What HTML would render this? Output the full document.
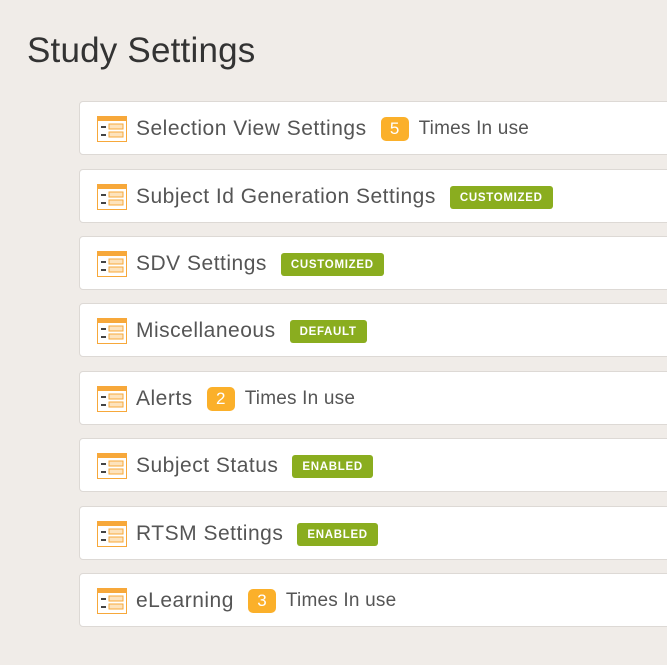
<!DOCTYPE html>
<html><head><style>
body{margin:0;width:667px;height:665px;background:#f0ece8;font-family:"Liberation Sans",sans-serif;overflow:hidden;position:relative}
h1{position:absolute;left:27px;top:31px;margin:0;font-weight:normal;font-size:35px;color:#333;letter-spacing:0.2px}
.card{position:absolute;left:79px;width:600px;height:54px;background:#fff;border:1px solid #ddd9d5;border-radius:4px;box-sizing:border-box}
.ic{position:absolute;left:17px;top:14px}
.t{position:absolute;left:56px;top:15px;font-size:21px;letter-spacing:0.5px;color:#555;white-space:nowrap;display:flex;align-items:center}
.u{font-size:19px;letter-spacing:0.2px}
.n{display:inline-block;background:#fbb02a;color:#fff;border-radius:5px;width:28px;height:24px;line-height:24px;text-align:center;font-size:17px;margin:0 10px 0 14px;letter-spacing:0}
.g{display:inline-block;background:#8aad1f;color:#fff;border-radius:3px;height:23px;line-height:24px;padding:0 10px;font-size:11.5px;font-weight:bold;margin-left:14px;letter-spacing:.7px}
</style></head><body>
<h1>Study Settings</h1>
<svg width="0" height="0" style="position:absolute"><defs><g id="i"><rect x="0.5" y="0.5" width="29" height="25" fill="#fff" stroke="#f7a83a"/><rect x="0" y="0" width="30" height="5" fill="#f7a83a"/><rect x="12" y="8" width="14" height="5" fill="#fde3bd" stroke="#f7a83a"/><rect x="12" y="16" width="14" height="5" fill="#fde3bd" stroke="#f7a83a"/><rect x="4" y="10" width="5" height="2" fill="#444"/><rect x="4" y="18" width="5" height="2" fill="#444"/></g></defs></svg>
<div class="card" style="top:101px"><svg class="ic" width="30" height="26"><use href="#i"/></svg><div class="t">Selection View Settings<span class="n">5</span><span class="u">Times In use</span></div></div>
<div class="card" style="top:169px"><svg class="ic" width="30" height="26"><use href="#i"/></svg><div class="t">Subject Id Generation Settings<span class="g">CUSTOMIZED</span></div></div>
<div class="card" style="top:236px"><svg class="ic" width="30" height="26"><use href="#i"/></svg><div class="t">SDV Settings<span class="g">CUSTOMIZED</span></div></div>
<div class="card" style="top:303px"><svg class="ic" width="30" height="26"><use href="#i"/></svg><div class="t">Miscellaneous<span class="g">DEFAULT</span></div></div>
<div class="card" style="top:371px"><svg class="ic" width="30" height="26"><use href="#i"/></svg><div class="t">Alerts<span class="n">2</span><span class="u">Times In use</span></div></div>
<div class="card" style="top:438px"><svg class="ic" width="30" height="26"><use href="#i"/></svg><div class="t">Subject Status<span class="g">ENABLED</span></div></div>
<div class="card" style="top:506px"><svg class="ic" width="30" height="26"><use href="#i"/></svg><div class="t">RTSM Settings<span class="g">ENABLED</span></div></div>
<div class="card" style="top:573px"><svg class="ic" width="30" height="26"><use href="#i"/></svg><div class="t">eLearning<span class="n">3</span><span class="u">Times In use</span></div></div>
</body></html>
